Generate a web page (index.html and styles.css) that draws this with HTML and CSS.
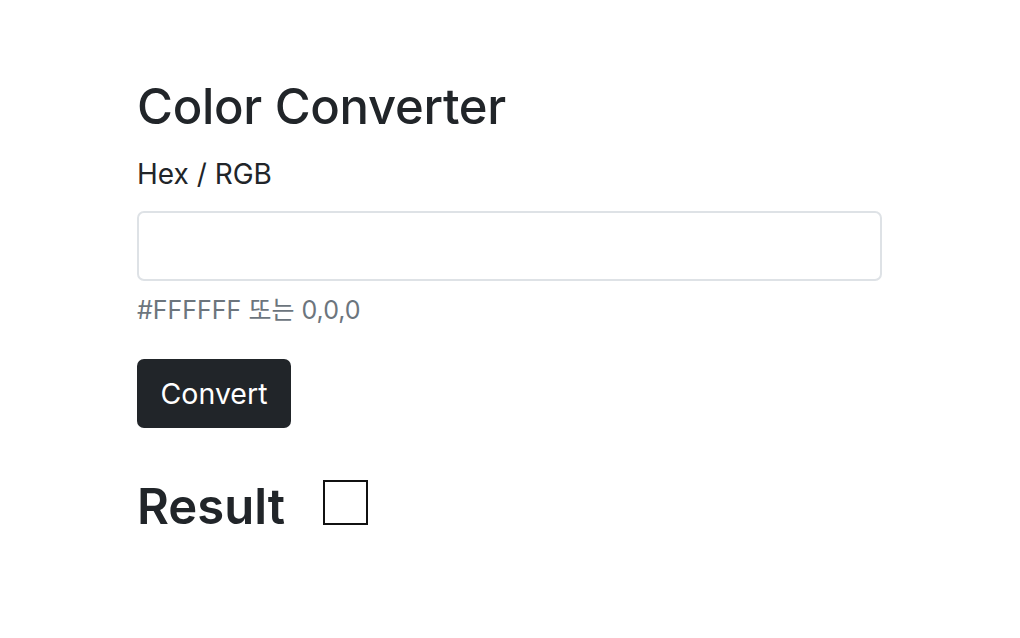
FILE: index.html
```html
<!DOCTYPE html>
<html lang="ko">
<head>
<meta charset="utf-8">
<title>Color Converter</title>
<link rel="stylesheet" href="styles.css">
</head>
<body>
<main class="page">
  <h1 class="title">Color Converter</h1>
  <label class="label" for="color">Hex / RGB</label>
  <input class="input" id="color" type="text">
  <div class="help">#FFFFFF 또는 0,0,0</div>
  <button class="btn" type="button">Convert</button>
  <div class="result">
    <h2 class="result-title">Result</h2>
    <div class="swatch"></div>
  </div>
</main>
</body>
</html>
```

FILE: styles.css
```css
html, body {
  margin: 0;
  padding: 0;
  background: #fff;
}
body {
  font-family: Inter, "Noto Sans CJK KR", sans-serif;
  color: #212529;
}
.page {
  width: 745px;
  padding: 80px 0 0 137px;
  display: flex;
  flex-direction: column;
  align-items: flex-start;
}
.title {
  margin: 0;
  font-size: 49px;
  font-weight: 500;
  line-height: 54px;
  letter-spacing: -0.3px;
}
.label {
  margin-top: 20px;
  font-size: 28px;
  line-height: 40px;
}
.input {
  margin-top: 17px;
  box-sizing: border-box;
  width: 745px;
  height: 70px;
  border: 2px solid #dee2e6;
  border-radius: 7px;
  background: #fff;
  font-size: 26px;
  outline: none;
}
.help {
  margin-top: 12px;
  font-size: 25px;
  line-height: 34px;
  color: #6c757d;
}
.btn {
  margin-top: 32px;
  box-sizing: border-box;
  width: 154px;
  height: 69px;
  border: none;
  border-radius: 7px;
  background: #212529;
  color: #fff;
  font-family: inherit;
  font-size: 28.5px;
  cursor: pointer;
}
.result {
  margin-top: 51px;
  display: flex;
  align-items: flex-start;
  gap: 38px;
}
.result-title {
  margin: 0;
  font-size: 49px;
  font-weight: 600;
  line-height: 56px;
}
.swatch {
  box-sizing: border-box;
  width: 45px;
  height: 45px;
  border: 2px solid #111;
  background: #fff;
  margin-top: 1px;
}
```
